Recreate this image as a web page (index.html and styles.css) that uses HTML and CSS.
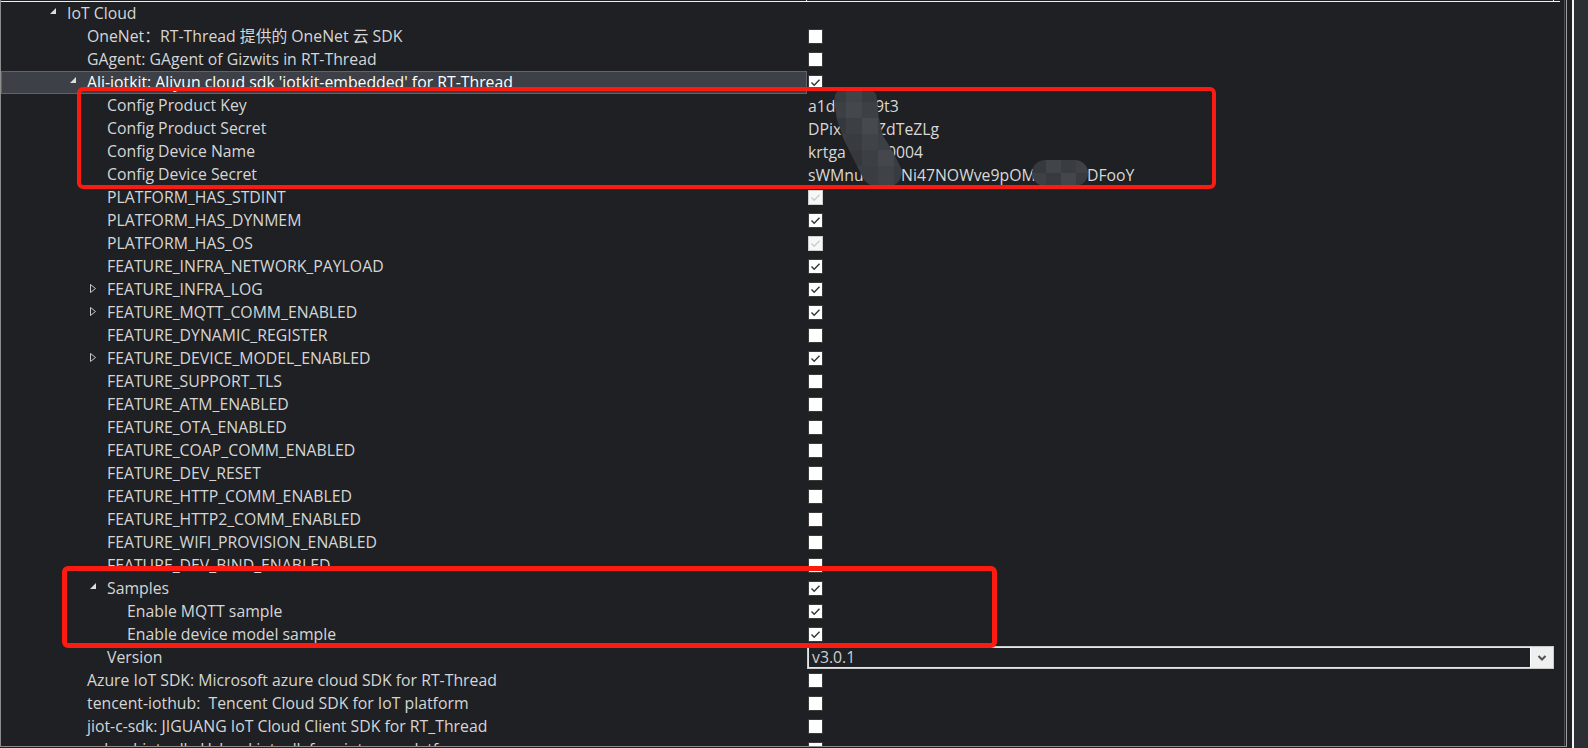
FILE: index.html
```html
<!DOCTYPE html>
<html lang="zh-CN">
<head>
<meta charset="utf-8">
<title>RT-Thread Settings</title>
<link rel="stylesheet" href="styles.css">
</head>
<body>
<div class="window">
  <div class="panel">
    <div class="list">
      <div class="header"><div class="hcell c1"></div><div class="hcell c2"></div></div>
      <div class="rows">
        <div class="row"><div class="name l0"><span class="exp"><svg width="8" height="12" viewBox="0 0 8 12"><polygon points="6,0 6,6 0,6" class="tri-open"/></svg></span><span class="label">IoT Cloud</span></div><div class="val"></div></div>
        <div class="row"><div class="name l1"><span class="exp"></span><span class="label">OneNet：RT-Thread 提供的 OneNet 云 SDK</span></div><div class="val"><span class="cb"></span></div></div>
        <div class="row"><div class="name l1"><span class="exp"></span><span class="label">GAgent: GAgent of Gizwits in RT-Thread</span></div><div class="val"><span class="cb"></span></div></div>
        <div class="row sel"><div class="name l1"><span class="exp"><svg width="8" height="12" viewBox="0 0 8 12"><polygon points="6,0 6,6 0,6" class="tri-open"/></svg></span><span class="label">Ali-iotkit: Aliyun cloud sdk 'iotkit-embedded' for RT-Thread</span></div><div class="val"><span class="cb"><svg width="15" height="15" viewBox="0 0 15 15"><path d="M3.5 7.5 L6.2 10.2 L11.5 4.8" class="ck"/></svg></span></div></div>
        <div class="row"><div class="name l2"><span class="exp"></span><span class="label">Config Product Key</span></div><div class="val"><span class="text"><span class="seg s67">a1d</span>9t3</span></div></div>
        <div class="row"><div class="name l2"><span class="exp"></span><span class="label">Config Product Secret</span></div><div class="val"><span class="text"><span class="seg s69">DPix</span>ZdTeZLg</span></div></div>
        <div class="row"><div class="name l2"><span class="exp"></span><span class="label">Config Device Name</span></div><div class="val"><span class="text"><span class="seg s79">krtga</span>0004</span></div></div>
        <div class="row"><div class="name l2"><span class="exp"></span><span class="label">Config Device Secret</span></div><div class="val"><span class="text"><span class="seg s93">sWMnu</span><span class="seg s186">Ni47NOWve9pOM</span>DFooY</span></div></div>
        <div class="row"><div class="name l2"><span class="exp"></span><span class="label">PLATFORM_HAS_STDINT</span></div><div class="val"><span class="cb dis"><svg width="15" height="15" viewBox="0 0 15 15"><path d="M3.5 7.5 L6.2 10.2 L11.5 4.8" class="ck"/></svg></span></div></div>
        <div class="row"><div class="name l2"><span class="exp"></span><span class="label">PLATFORM_HAS_DYNMEM</span></div><div class="val"><span class="cb"><svg width="15" height="15" viewBox="0 0 15 15"><path d="M3.5 7.5 L6.2 10.2 L11.5 4.8" class="ck"/></svg></span></div></div>
        <div class="row"><div class="name l2"><span class="exp"></span><span class="label">PLATFORM_HAS_OS</span></div><div class="val"><span class="cb dis"><svg width="15" height="15" viewBox="0 0 15 15"><path d="M3.5 7.5 L6.2 10.2 L11.5 4.8" class="ck"/></svg></span></div></div>
        <div class="row"><div class="name l2"><span class="exp"></span><span class="label">FEATURE_INFRA_NETWORK_PAYLOAD</span></div><div class="val"><span class="cb"><svg width="15" height="15" viewBox="0 0 15 15"><path d="M3.5 7.5 L6.2 10.2 L11.5 4.8" class="ck"/></svg></span></div></div>
        <div class="row"><div class="name l2"><span class="exp"><svg width="8" height="12" viewBox="0 0 8 12"><polygon points="0.5,0.5 5.5,4.5 0.5,8.5" class="tri-closed"/></svg></span><span class="label">FEATURE_INFRA_LOG</span></div><div class="val"><span class="cb"><svg width="15" height="15" viewBox="0 0 15 15"><path d="M3.5 7.5 L6.2 10.2 L11.5 4.8" class="ck"/></svg></span></div></div>
        <div class="row"><div class="name l2"><span class="exp"><svg width="8" height="12" viewBox="0 0 8 12"><polygon points="0.5,0.5 5.5,4.5 0.5,8.5" class="tri-closed"/></svg></span><span class="label">FEATURE_MQTT_COMM_ENABLED</span></div><div class="val"><span class="cb"><svg width="15" height="15" viewBox="0 0 15 15"><path d="M3.5 7.5 L6.2 10.2 L11.5 4.8" class="ck"/></svg></span></div></div>
        <div class="row"><div class="name l2"><span class="exp"></span><span class="label">FEATURE_DYNAMIC_REGISTER</span></div><div class="val"><span class="cb"></span></div></div>
        <div class="row"><div class="name l2"><span class="exp"><svg width="8" height="12" viewBox="0 0 8 12"><polygon points="0.5,0.5 5.5,4.5 0.5,8.5" class="tri-closed"/></svg></span><span class="label">FEATURE_DEVICE_MODEL_ENABLED</span></div><div class="val"><span class="cb"><svg width="15" height="15" viewBox="0 0 15 15"><path d="M3.5 7.5 L6.2 10.2 L11.5 4.8" class="ck"/></svg></span></div></div>
        <div class="row"><div class="name l2"><span class="exp"></span><span class="label">FEATURE_SUPPORT_TLS</span></div><div class="val"><span class="cb"></span></div></div>
        <div class="row"><div class="name l2"><span class="exp"></span><span class="label">FEATURE_ATM_ENABLED</span></div><div class="val"><span class="cb"></span></div></div>
        <div class="row"><div class="name l2"><span class="exp"></span><span class="label">FEATURE_OTA_ENABLED</span></div><div class="val"><span class="cb"></span></div></div>
        <div class="row"><div class="name l2"><span class="exp"></span><span class="label">FEATURE_COAP_COMM_ENABLED</span></div><div class="val"><span class="cb"></span></div></div>
        <div class="row"><div class="name l2"><span class="exp"></span><span class="label">FEATURE_DEV_RESET</span></div><div class="val"><span class="cb"></span></div></div>
        <div class="row"><div class="name l2"><span class="exp"></span><span class="label">FEATURE_HTTP_COMM_ENABLED</span></div><div class="val"><span class="cb"></span></div></div>
        <div class="row"><div class="name l2"><span class="exp"></span><span class="label">FEATURE_HTTP2_COMM_ENABLED</span></div><div class="val"><span class="cb"></span></div></div>
        <div class="row"><div class="name l2"><span class="exp"></span><span class="label">FEATURE_WIFI_PROVISION_ENABLED</span></div><div class="val"><span class="cb"></span></div></div>
        <div class="row"><div class="name l2"><span class="exp"></span><span class="label">FEATURE_DEV_BIND_ENABLED</span></div><div class="val"><span class="cb"></span></div></div>
        <div class="row"><div class="name l2"><span class="exp"><svg width="8" height="12" viewBox="0 0 8 12"><polygon points="6,0 6,6 0,6" class="tri-open"/></svg></span><span class="label">Samples</span></div><div class="val"><span class="cb"><svg width="15" height="15" viewBox="0 0 15 15"><path d="M3.5 7.5 L6.2 10.2 L11.5 4.8" class="ck"/></svg></span></div></div>
        <div class="row"><div class="name l3"><span class="exp"></span><span class="label">Enable MQTT sample</span></div><div class="val"><span class="cb"><svg width="15" height="15" viewBox="0 0 15 15"><path d="M3.5 7.5 L6.2 10.2 L11.5 4.8" class="ck"/></svg></span></div></div>
        <div class="row"><div class="name l3"><span class="exp"></span><span class="label">Enable device model sample</span></div><div class="val"><span class="cb"><svg width="15" height="15" viewBox="0 0 15 15"><path d="M3.5 7.5 L6.2 10.2 L11.5 4.8" class="ck"/></svg></span></div></div>
        <div class="row"><div class="name l2"><span class="exp"></span><span class="label">Version</span></div><div class="val"><div class="combo"><span class="combo-text">v3.0.1</span><span class="combo-btn"><svg width="10" height="8" viewBox="0 0 10 8"><path d="M1.5 2 L5 5.5 L8.5 2" class="chev"/></svg></span></div></div></div>
        <div class="row"><div class="name l1"><span class="exp"></span><span class="label">Azure IoT SDK: Microsoft azure cloud SDK for RT-Thread</span></div><div class="val"><span class="cb"></span></div></div>
        <div class="row"><div class="name l1"><span class="exp"></span><span class="label">tencent-iothub:&nbsp; Tencent Cloud SDK for IoT platform</span></div><div class="val"><span class="cb"></span></div></div>
        <div class="row"><div class="name l1"><span class="exp"></span><span class="label">jiot-c-sdk: JIGUANG IoT Cloud Client SDK for RT_Thread</span></div><div class="val"><span class="cb"></span></div></div>
        <div class="row"><div class="name l1"><span class="exp"></span><span class="label">ucloud-iot-sdk: Ucloud iot sdk for uiot-core platform</span></div><div class="val"><span class="cb"></span></div></div>
      </div>
    </div>
    <div class="vline"></div>
  </div>
  <div class="gap"></div>
  <div class="side"></div>

  <svg class="blob blob1" width="80" height="104" viewBox="0 0 80 104">
    <defs>
      <mask id="m1"><path d="M15,2 L40,2 Q47,6 47,14 L49,32 L53,50 L62,64 L72,84 Q72,100 56,101 L48,101 Q36,99 33,92 L24,74 L14,54 L7,34 L4,14 Q5,3 15,2 Z" fill="#fff"/></mask>
    </defs>
    <g mask="url(#m1)">
      <rect x="0" y="0" width="80" height="104" fill="#3b3e43"/>
      <rect x="0" y="0" width="16" height="16" fill="#383b40"/>
      <rect x="16" y="0" width="16" height="16" fill="#404348"/>
      <rect x="32" y="0" width="16" height="16" fill="#373a3e"/>
      <rect x="0" y="16" width="16" height="16" fill="#3c3f44"/>
      <rect x="16" y="16" width="16" height="16" fill="#44474c"/>
      <rect x="32" y="16" width="16" height="16" fill="#3d4045"/>
      <rect x="48" y="16" width="16" height="16" fill="#35383c"/>
      <rect x="0" y="32" width="16" height="16" fill="#35383c"/>
      <rect x="16" y="32" width="16" height="16" fill="#3c3f44"/>
      <rect x="32" y="32" width="16" height="16" fill="#46494e"/>
      <rect x="48" y="32" width="16" height="16" fill="#3a3d41"/>
      <rect x="16" y="48" width="16" height="16" fill="#383b3f"/>
      <rect x="32" y="48" width="16" height="16" fill="#404348"/>
      <rect x="48" y="48" width="16" height="16" fill="#3c3f44"/>
      <rect x="64" y="48" width="16" height="16" fill="#36393d"/>
      <rect x="16" y="64" width="16" height="16" fill="#35383c"/>
      <rect x="32" y="64" width="16" height="16" fill="#3c3f44"/>
      <rect x="48" y="64" width="16" height="16" fill="#44474c"/>
      <rect x="64" y="64" width="16" height="16" fill="#3a3d41"/>
      <rect x="32" y="80" width="16" height="24" fill="#3a3d41"/>
      <rect x="48" y="80" width="16" height="24" fill="#3f4247"/>
      <rect x="64" y="80" width="16" height="24" fill="#383b3f"/>
    </g>
  </svg>
  <svg class="blob blob2" width="58" height="28" viewBox="0 0 58 28">
    <defs>
      <mask id="m2"><rect x="1" y="1" width="56" height="26" rx="13" fill="#fff"/></mask>
    </defs>
    <g mask="url(#m2)">
      <rect x="0" y="0" width="58" height="28" fill="#3b3e43"/>
      <rect x="0" y="0" width="15" height="14" fill="#36393d"/>
      <rect x="15" y="0" width="15" height="14" fill="#414449"/>
      <rect x="30" y="0" width="15" height="14" fill="#393c40"/>
      <rect x="45" y="0" width="13" height="14" fill="#3e4146"/>
      <rect x="0" y="14" width="15" height="14" fill="#3d4045"/>
      <rect x="15" y="14" width="15" height="14" fill="#373a3e"/>
      <rect x="30" y="14" width="15" height="14" fill="#43464b"/>
      <rect x="45" y="14" width="13" height="14" fill="#383b3f"/>
    </g>
  </svg>

  <div class="mark mark1"></div>
  <div class="mark mark2"></div>
</div>
</body>
</html>
```

FILE: styles.css
```css
* { box-sizing: border-box; }

html, body {
  margin: 0;
  padding: 0;
}

body {
  width: 1588px;
  height: 748px;
  overflow: hidden;
  background: #1e2023;
  font-family: "Open Sans", "Noto Sans CJK SC", sans-serif;
  font-size: 15.8px;
  color: #d6d6d6;
}

.window {
  position: relative;
  display: flex;
  width: 1588px;
  height: 748px;
}

.panel {
  display: flex;
  width: 1567px;
  height: 747px;
  border-left: 1px solid #8c8c8c;
  border-right: 1px solid #a0a0a0;
  border-bottom: 1px solid #8c8c8c;
}

.list {
  width: 1562px;
  height: 746px;
  overflow: hidden;
}

.header {
  display: flex;
  width: 1559px;
  height: 2px;
  border-bottom: 1px solid #f0f0f0;
}

.hcell {
  height: 1px;
  border-right: 1px solid #f0f0f0;
}

.hcell.c1 { width: 806px; }
.hcell.c2 { width: 747px; }

.vline {
  width: 1px;
  margin-left: 1px;
  background: #4a4d52;
}

.gap {
  width: 5px;
}

.side {
  width: 16px;
  border-left: 2px solid #f4f4f4;
  background: #2c2f33;
}

.rows {
  display: flex;
  flex-direction: column;
}

.row {
  display: grid;
  grid-template-columns: 806px 1fr;
  height: 23px;
  flex: none;
}

.name {
  display: flex;
  align-items: center;
  height: 23px;
  white-space: nowrap;
  border: 1px solid transparent;
}

.name.l0 { padding-left: 45px; }
.name.l1 { padding-left: 65px; }
.name.l2 { padding-left: 85px; }
.name.l3 { padding-left: 105px; }

.row.sel .name {
  background: #3d4147;
  border-color: #5f646b;
  color: #ffffff;
}

.exp {
  display: inline-flex;
  align-items: center;
  width: 20px;
  height: 21px;
  flex: none;
}

.exp svg {
  margin-left: 3px;
}

.tri-open { fill: #dcdcdc; }
.tri-closed { fill: none; stroke: #c8c8c8; stroke-width: 1; }

.label {
  line-height: 21px;
}

.val {
  display: flex;
  align-items: center;
  height: 23px;
  white-space: nowrap;
}

.cb {
  display: block;
  width: 15px;
  height: 15px;
  margin-left: 1px;
  background: #ffffff;
  border: 1px solid #3a3a3a;
  position: relative;
}

.cb svg {
  position: absolute;
  left: -1px;
  top: -1px;
}

.ck {
  fill: none;
  stroke: #333333;
  stroke-width: 1.4;
}

.cb.dis {
  background: #f7f7f7;
  border-color: #cfcfcf;
}

.cb.dis .ck { stroke: #cbcbcb; }

.text {
  padding-left: 1px;
  color: #d8d8d8;
}

.seg {
  display: inline-block;
  vertical-align: top;
}

.s67 { width: 67px; }
.s69 { width: 69px; }
.s79 { width: 79px; }
.s93 { width: 93px; }
.s186 { width: 186px; }

.combo {
  display: flex;
  width: 747px;
  height: 23px;
  border: 1px solid #c9c9c9;
  box-shadow: inset 0 0 0 1px #e6e6e6;
}

.combo-text {
  flex: 1;
  padding-left: 4px;
  line-height: 20px;
  color: #cfcfcf;
}

.combo-btn {
  display: flex;
  align-items: center;
  justify-content: center;
  width: 23px;
  background: #efefef;
  border-left: 1px solid #ffffff;
}

.chev {
  fill: none;
  stroke: #505050;
  stroke-width: 2;
}

.blob {
  position: absolute;
}

.blob1 { left: 830px; top: 86px; }
.blob2 { left: 1031px; top: 159px; }

.mark {
  position: absolute;
  border: 4px solid #fb1b10;
  border-radius: 6px;
}

.mark1 {
  left: 77px;
  top: 87px;
  width: 1139px;
  height: 102px;
}

.mark2 {
  left: 62px;
  top: 566px;
  width: 935px;
  height: 82px;
  border-width: 5px;
}
```
